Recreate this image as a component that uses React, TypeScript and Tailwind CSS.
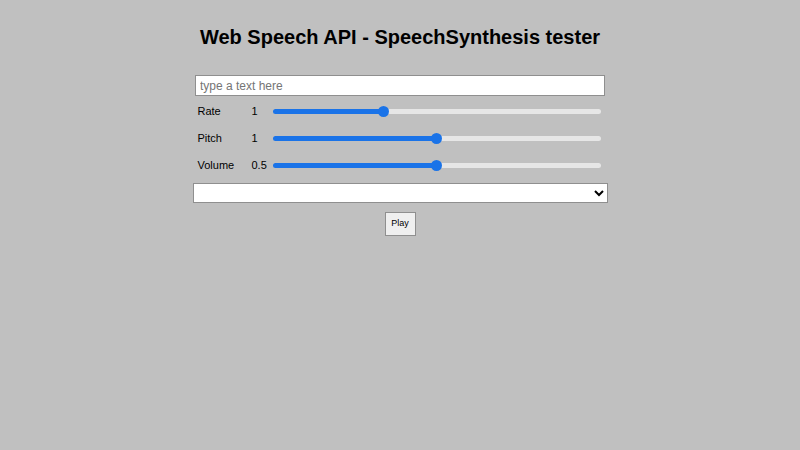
import { useState } from "react";

export default function App() {
  const [text, setText] = useState("");
  const [rate, setRate] = useState(1);
  const [pitch, setPitch] = useState(1);
  const [volume, setVolume] = useState(0.5);

  return (
    <div className="min-h-[450px] w-full bg-[#c0c0c0] font-['Liberation_Sans',Arial,sans-serif] text-black">
      <div className="mx-auto w-[500px] pt-[25px]">
        <h1 className="text-center text-[20px] font-bold leading-[24px]">
          Web Speech API - SpeechSynthesis tester
        </h1>

        <form className="mt-[26px] flex flex-col" onSubmit={(e) => e.preventDefault()}>
          <input
            type="text"
            value={text}
            onChange={(e) => setText(e.target.value)}
            placeholder="type a text here"
            className="mx-auto block h-[21px] w-[410px] border border-[#8f8f8f] bg-white px-[4px] text-[12px] text-black placeholder:text-[#757575] outline-none"
          />

          <div className="mx-auto mt-[2px] w-[405px]">
            <SliderRow label="Rate" value={rate} shown="1" min={0.5} max={2} step={0.1} onChange={setRate} />
            <SliderRow label="Pitch" value={pitch} shown="1" min={0} max={2} step={0.1} onChange={setPitch} />
            <SliderRow label="Volume" value={volume} shown="0.5" min={0} max={1} step={0.1} onChange={setVolume} />
          </div>

          <select className="mx-auto mt-[4px] block h-[20px] w-[415px] border border-[#8f8f8f] bg-white text-[12px]">
          </select>

          <div className="mt-[9px] flex justify-center">
            <button
              type="button"
              className="h-[24px] w-[31px] border border-[#8f8f8f] bg-[#efefef] text-[9px] text-black"
            >
              Play
            </button>
          </div>
        </form>
      </div>
    </div>
  );
}

function SliderRow({
  label,
  value,
  shown,
  min,
  max,
  step,
  onChange,
}: {
  label: string;
  value: number;
  shown: string;
  min: number;
  max: number;
  step: number;
  onChange: (v: number) => void;
}) {
  const pct = ((value - min) / (max - min)) * 100;
  return (
    <div className="flex h-[27px] items-center">
      <label className="w-[54px] text-[11px]">{label}</label>
      <span className="w-[21px] text-[11px]">{shown}</span>
      <input
        type="range"
        min={min}
        max={max}
        step={step}
        value={value}
        onChange={(e) => onChange(Number(e.target.value))}
        style={{
          background: `linear-gradient(to right, #1a73e8 ${pct}%, #e6e6e6 ${pct}%)`,
        }}
        className="m-0 mr-[2px] h-[5px] flex-1 cursor-pointer appearance-none rounded-full outline-none [&::-webkit-slider-thumb]:h-[11px] [&::-webkit-slider-thumb]:w-[11px] [&::-webkit-slider-thumb]:appearance-none [&::-webkit-slider-thumb]:rounded-full [&::-webkit-slider-thumb]:bg-[#1a73e8]"
      />
    </div>
  );
}
